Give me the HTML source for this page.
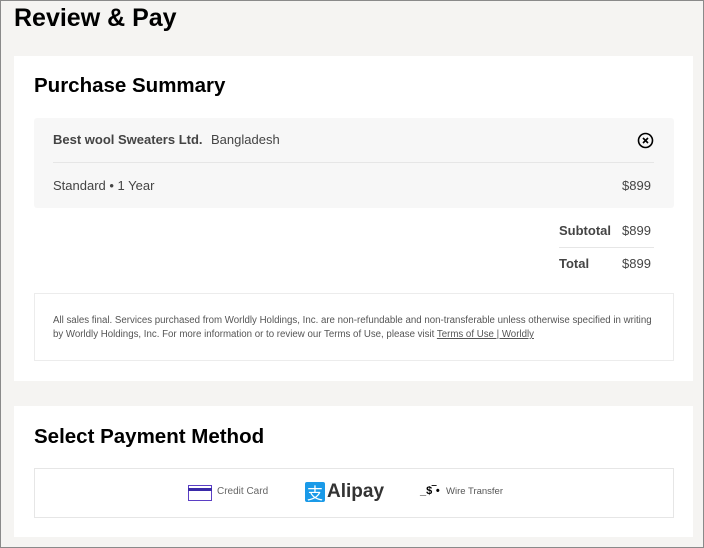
<!DOCTYPE html>
<html><head><style>
*{box-sizing:border-box;margin:0;padding:0}
body{width:704px;height:548px;background:#f5f4f2;font-family:"Liberation Sans",sans-serif;position:relative;overflow:hidden}
.abs{position:absolute}
h1{position:absolute;left:14px;top:4px;font-size:25px;font-weight:900;color:#000}
h2{position:absolute;font-size:20.5px;font-weight:900;color:#000}
.card{position:absolute;left:14px;width:679px;background:#fff}
.t{position:absolute;font-size:13px;color:#444;white-space:nowrap}
</style></head><body>
<div class="abs" style="left:0;top:0;width:704px;height:548px;border:1px solid #8a8a8a"></div>
<h1>Review &amp; Pay</h1>
<div class="card" style="top:56px;height:325px"></div>
<h2 style="left:34px;top:74px">Purchase Summary</h2>
<div class="abs" style="left:34px;top:118px;width:640px;height:90px;background:#f7f7f7;border-radius:3px"></div>
<div class="t" style="left:53px;top:132px;font-weight:bold;color:#444">Best wool Sweaters Ltd.</div>
<div class="t" style="left:211px;top:132px">Bangladesh</div>
<svg class="abs" style="left:637px;top:132px" width="17" height="17" viewBox="0 0 17 17"><circle cx="8.5" cy="8.5" r="7" fill="none" stroke="#000" stroke-width="1.6"/><path d="M6 6l5 5M11 6l-5 5" stroke="#000" stroke-width="1.6"/></svg>
<div class="abs" style="left:53px;top:162px;width:601px;height:1px;background:#e6e6e6"></div>
<div class="t" style="left:53px;top:178px">Standard • 1 Year</div>
<div class="t" style="left:622px;top:178px">$899</div>
<div class="t" style="left:559px;top:223px;font-weight:bold">Subtotal</div>
<div class="t" style="left:622px;top:223px">$899</div>
<div class="abs" style="left:559px;top:247px;width:95px;height:1px;background:#e6e6e6"></div>
<div class="t" style="left:559px;top:256px;font-weight:bold">Total</div>
<div class="t" style="left:622px;top:256px">$899</div>
<div class="abs" style="left:34px;top:293px;width:640px;height:68px;border:1px solid #ececec"></div>
<div class="abs" style="left:53px;top:314px;width:599px;font-size:9.7px;line-height:14px;color:#555">All sales final. Services purchased from Worldly Holdings, Inc. are non-refundable and non-transferable unless otherwise specified in writing by Worldly Holdings, Inc. For more information or to review our Terms of Use, please visit <u>Terms of Use | Worldly</u></div>
<div class="card" style="top:406px;height:131px"></div>
<h2 style="left:34px;top:425px">Select Payment Method</h2>
<div class="abs" style="left:34px;top:468px;width:640px;height:50px;border:1px solid #e6e6e6"></div>
<svg class="abs" style="left:188px;top:485px" width="24" height="16"><rect x="0.5" y="0.5" width="23" height="15" fill="none" stroke="#5b3fc4"/><rect x="0" y="3" width="24" height="3" fill="#3a2aa8"/></svg>
<div class="t" style="left:217px;top:486px;font-size:10px;color:#666">Credit Card</div>
<div class="abs" style="left:305px;top:482px;width:20px;height:20px;background:#1a9ae8;border-radius:2px;color:#fff;font-size:16px;line-height:20px;text-align:center;font-family:'Noto Sans CJK SC',sans-serif">支</div>
<div class="t" style="left:327px;top:481px;font-size:19px;font-weight:bold;color:#333">Alipay</div>
<div class="t" style="left:420px;top:485px;font-size:11px;font-weight:bold;color:#000">_$‾•</div>
<div class="t" style="left:446px;top:486px;font-size:9.5px;color:#555">Wire Transfer</div>
</body></html>
